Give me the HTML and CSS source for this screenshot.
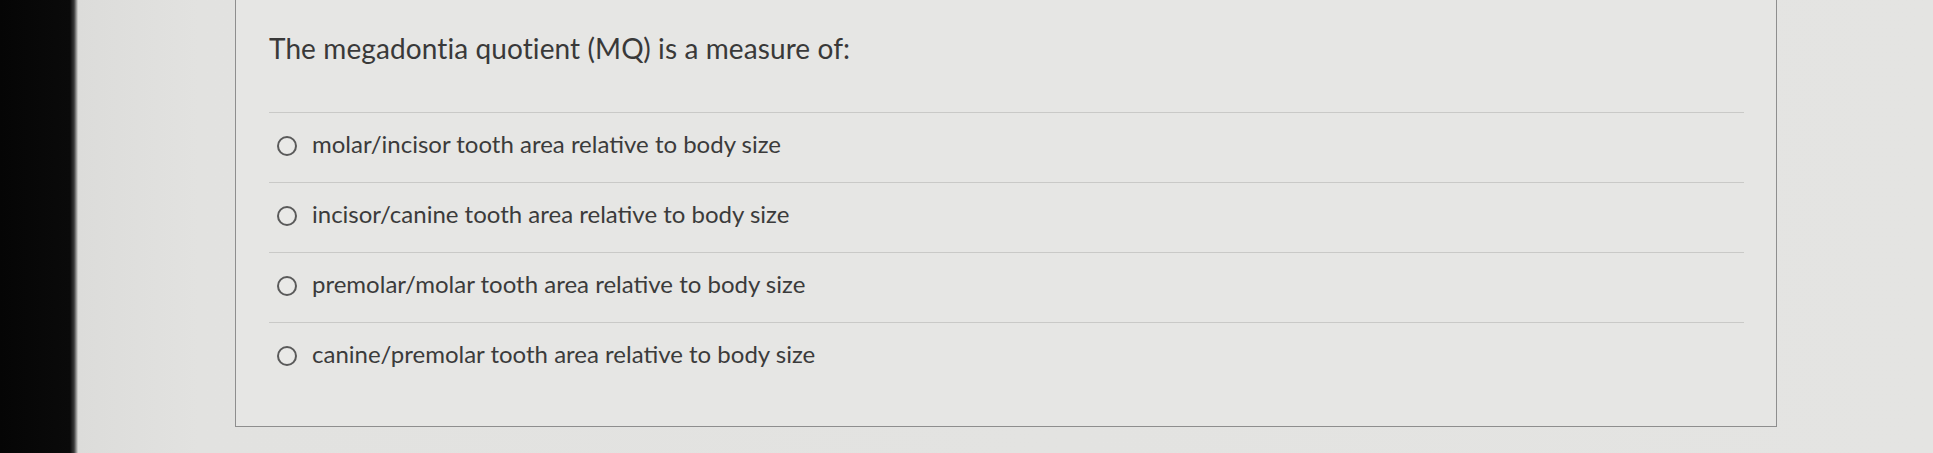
FILE: index.html
```html
<!DOCTYPE html>
<html lang="en">
<head>
<meta charset="utf-8">
<title>Quiz question</title>
<link rel="stylesheet" href="styles.css">
</head>
<body>
<div class="screen">
  <div class="bezel"></div>
  <main class="page">
    <section class="card">
      <div class="question">The megadontia quotient (MQ) is a measure of:</div>
      <ul class="options">
        <li class="option"><span class="radio"></span><span class="label">molar/incisor tooth area relative to body size</span></li>
        <li class="option"><span class="radio"></span><span class="label">incisor/canine tooth area relative to body size</span></li>
        <li class="option"><span class="radio"></span><span class="label">premolar/molar tooth area relative to body size</span></li>
        <li class="option"><span class="radio"></span><span class="label">canine/premolar tooth area relative to body size</span></li>
      </ul>
    </section>
  </main>
</div>
</body>
</html>
```

FILE: styles.css
```css
html, body {
  margin: 0;
  padding: 0;
  height: 100%;
  overflow: hidden;
}

body {
  background: #e2e2e0;
  font-family: Lato, "Open Sans", "Liberation Sans", sans-serif;
  color: #3a3a3a;
}

.screen {
  display: flex;
  height: 453px;
}

.bezel {
  width: 78px;
  flex: none;
  background: linear-gradient(to right, #050505 0, #0a0a0a 70px, #3a3a3a 74px, #d8d8d6 78px);
}

.page {
  flex: 1;
  background: linear-gradient(to right, #dcdcda 0, #e2e2e0 120px, #e4e4e2 100%);
}

.card {
  box-sizing: border-box;
  margin-left: 157px;
  width: 1542px;
  padding: 31px 32px 34px 33px;
  border: 1px solid #8e8e8e;
  border-top: none;
  background: #e6e6e4;
}

.question {
  font-size: 28px;
  line-height: 34px;
  margin-bottom: 47px;
  color: #393939;
  letter-spacing: 0.1px;
}

.options {
  list-style: none;
  margin: 0;
  padding: 0;
}

.option {
  display: flex;
  align-items: flex-start;
  border-top: 1px solid #c9c9c7;
  padding: 17px 0 24px 8px;
  font-size: 24px;
  line-height: 28px;
  color: #3b3b3b;
}

.radio {
  flex: none;
  width: 16px;
  height: 16px;
  border: 2px solid #5a5a5a;
  border-radius: 50%;
  margin-top: 6px;
  margin-right: 15px;
  background: #e9e9e7;
}

.label {
  white-space: nowrap;
}
```
